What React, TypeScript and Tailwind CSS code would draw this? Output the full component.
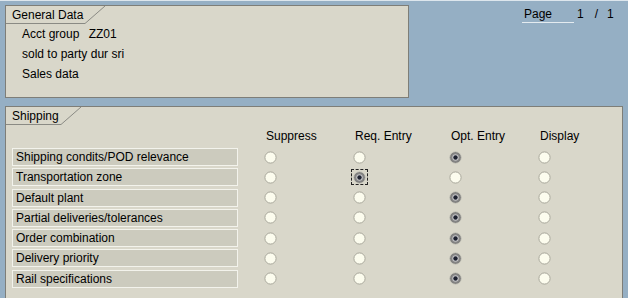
import React from 'react';

const rows = [
  { label: 'Shipping condits/POD relevance', sel: 2 },
  { label: 'Transportation zone', sel: 1, focus: true },
  { label: 'Default plant', sel: 2 },
  { label: 'Partial deliveries/tolerances', sel: 2 },
  { label: 'Order combination', sel: 2 },
  { label: 'Delivery priority', sel: 2 },
  { label: 'Rail specifications', sel: 2 },
];

const columns = [
  { title: 'Suppress', width: 'w-[89px]' },
  { title: 'Req. Entry', width: 'w-[96px]' },
  { title: 'Opt. Entry', width: 'w-[89px]' },
  { title: 'Display', width: 'w-[80px]' },
];

const Radio: React.FC<{ checked: boolean }> = ({ checked }) => (
  <svg width="13" height="13" viewBox="0 0 13 13" className="block">
    <defs>
      <radialGradient id="rg" cx="50%" cy="50%" r="50%">
        <stop offset="0%" stopColor="#c8c8c8" />
        <stop offset="100%" stopColor="#6a6a6a" />
      </radialGradient>
    </defs>
    {checked ? (
      <>
        <circle cx="6.5" cy="6.5" r="5.8" fill="url(#rg)" stroke="#c9c8bd" strokeWidth="1" />
        <circle cx="6.5" cy="6.5" r="3" fill="#d0d0d4" />
        <circle cx="6.5" cy="6.5" r="2.2" fill="#1e2230" />
      </>
    ) : (
      <circle cx="6.5" cy="6.5" r="5.6" fill="#fcfcee" stroke="#a9a89c" strokeWidth="1" />
    )}
  </svg>
);

const Tab: React.FC<{ title: string; slant: number }> = ({ title }) => (
  <div className="flex items-end h-[18px]">
    <span className="pl-[6px] pr-[2px] leading-[16px] border-b border-[#8a8a84]">{title}</span>
    <svg width="20" height="18" viewBox="0 0 20 18" className="block">
      <line x1="0" y1="17.5" x2="20" y2="0" stroke="#8a8a84" strokeWidth="1" />
    </svg>
  </div>
);

export default function App() {
  return (
    <div
      className="w-[628px] h-[298px] overflow-hidden bg-[#95afc4] border-t border-[#dde6ed] text-[12px] text-black"
      style={{ fontFamily: '"Liberation Sans", Arial, sans-serif' }}
    >
      <div className="flex">
        <div className="ml-[5px] mt-[4px] w-[404px] h-[93px] bg-[#d9d7ca] border border-[#7e7e78]">
          <Tab title="General Data" slant={20} />
          <div className="pl-[16px] pt-[0px]">
            <div className="h-[20px] leading-[20px]">
              Acct group <span className="ml-[6px]">ZZ01</span>
            </div>
            <div className="h-[20px] leading-[20px]">sold to party dur sri</div>
            <div className="h-[20px] leading-[20px]">Sales data</div>
          </div>
        </div>
        <div className="ml-[113px] mt-[6px] flex items-start">
          <span className="w-[52px] pl-[2px] leading-[15px] border-b border-[#e4ebf0]">Page</span>
          <span className="ml-[3px] leading-[15px]">1</span>
          <span className="ml-[11px] leading-[15px]">/</span>
          <span className="ml-[9px] leading-[15px]">1</span>
        </div>
      </div>

      <div className="ml-[5px] mt-[8px] w-[618px] h-[200px] bg-[#d9d7ca] border border-[#7e7e78]">
        <Tab title="Shipping" slant={17} />
        <div className="flex mt-[2px] h-[18px] leading-[18px]">
          <div className="w-[258px]" />
          {columns.map((c) => (
            <div key={c.title} className={`${c.width} pl-[2px]`}>
              {c.title}
            </div>
          ))}
        </div>
        <div className="mt-[3px] flex flex-col gap-[2.25px]">
          {rows.map((r) => (
            <div key={r.label} className="flex items-center h-[18px]">
              <div className="ml-[6px] w-[226px] h-[18px] leading-[16px] pl-[3px] bg-[#cccbbe] border border-[#f3f3ec]">
                {r.label}
              </div>
              <div className="w-[26px]" />
              {columns.map((c, i) => (
                <div key={c.title} className={`${c.width} flex items-center`}>
                  {r.focus && r.sel === i ? (
                    <div className="-ml-[2px] w-[17px] h-[16px] border border-dashed border-[#222] flex items-center justify-center">
                      <Radio checked />
                    </div>
                  ) : (
                    <Radio checked={r.sel === i} />
                  )}
                </div>
              ))}
            </div>
          ))}
        </div>
      </div>
    </div>
  );
}
